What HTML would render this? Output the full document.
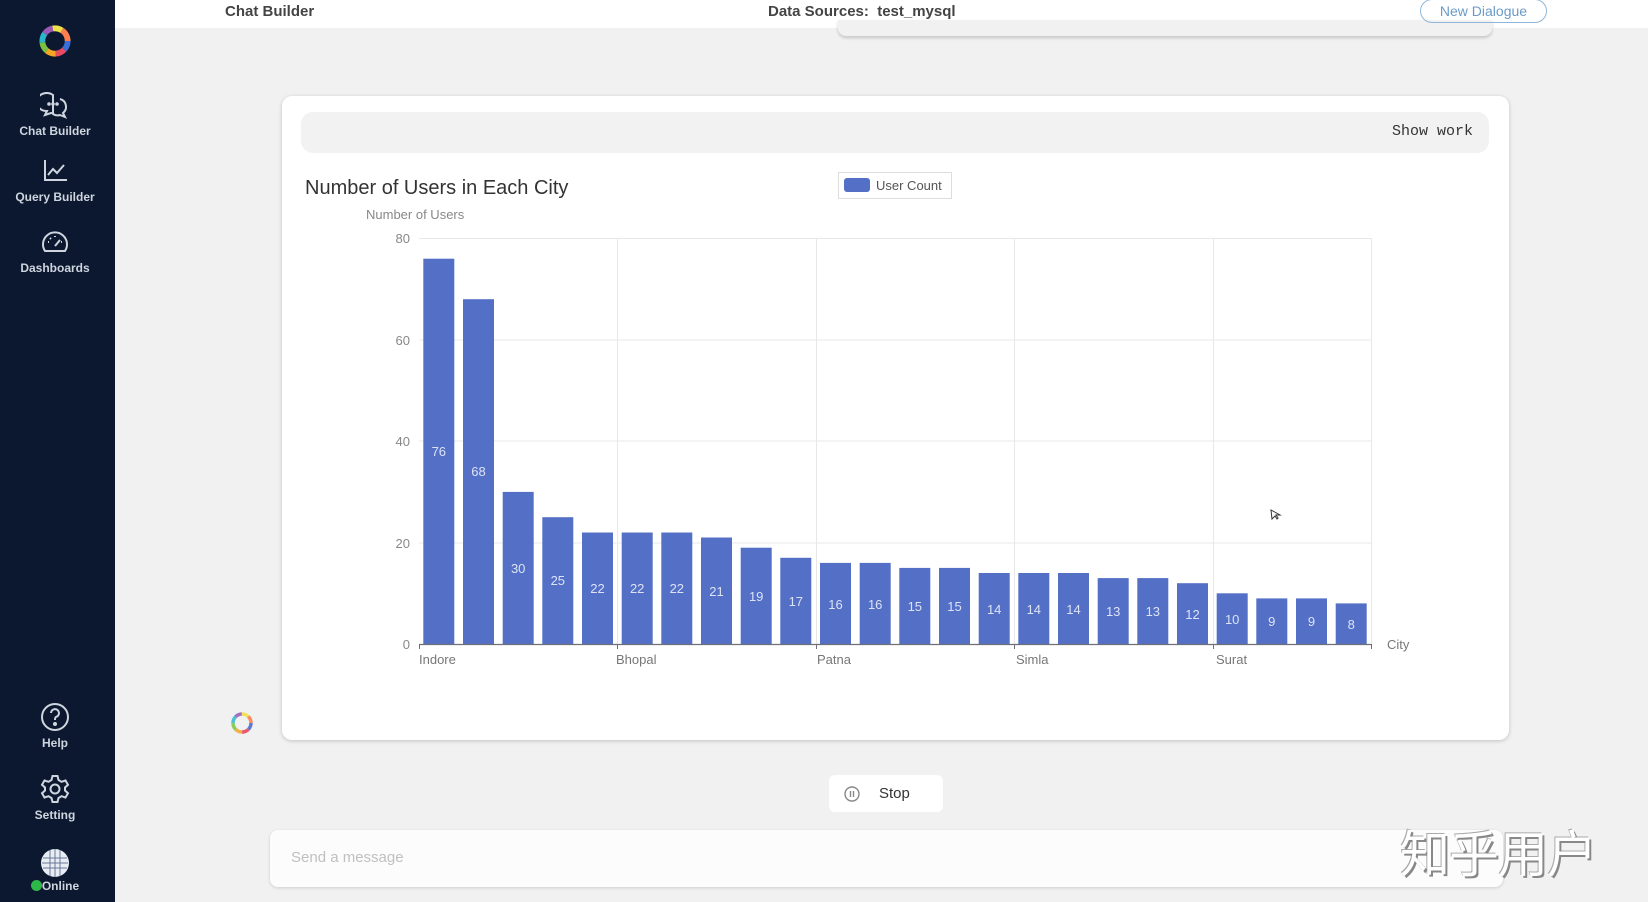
<!DOCTYPE html>
<html><head><meta charset="utf-8">
<style>
*{margin:0;padding:0;box-sizing:border-box}
body{width:1648px;height:902px;overflow:hidden;background:#f1f1f1;font-family:"Liberation Sans",sans-serif;position:relative}
.side{position:absolute;left:0;top:0;width:115px;height:902px;background:#0b1830}
.si{position:absolute;left:0;width:110px;text-align:center;color:#cfd5de;font-size:12px;font-weight:bold}
.si svg{display:block;margin:0 auto}
.hdr{position:absolute;left:115px;top:0;right:0;height:28px;background:#fff}
.ht{position:absolute;top:3px;font-size:15px;font-weight:bold;color:#444}
.nd{position:absolute;left:1420px;top:-1px;width:127px;height:24px;border:1.5px solid #8fb6d8;border-radius:13px;color:#6a9bc8;font-size:14px;text-align:center;line-height:22px}
.ghost{position:absolute;left:838px;top:20px;width:654px;height:16px;background:#f1f1f1;border-radius:0 0 8px 8px;box-shadow:0 2px 3px rgba(0,0,0,.18)}
.card{position:absolute;left:282px;top:96px;width:1227px;height:644px;background:#fff;border-radius:10px;box-shadow:0 1px 4px rgba(0,0,0,.2)}
.sw{position:absolute;left:19px;top:16px;width:1188px;height:41px;background:#f2f2f2;border-radius:12px}
.sw span{position:absolute;right:16px;top:11px;font-family:"Liberation Mono",monospace;font-size:15px;color:#333}
.stop{position:absolute;left:829px;top:775px;width:114px;height:37px;background:#fff;border-radius:6px}
.inp{position:absolute;left:270px;top:830px;width:1233px;height:57px;background:#fcfcfc;border-radius:8px;box-shadow:0 1px 3px rgba(0,0,0,.15)}
.inp span{position:absolute;left:21px;top:19px;font-size:15px;color:#c0c0c0}
.wm{position:absolute;left:1400px;top:815px;font-family:"Noto Sans CJK SC",sans-serif;font-size:50px;color:#fff;text-shadow:2px 2px 0 #888,-1px -1px 0 #aaa;letter-spacing:-1px}
</style></head><body>
<div class="side">
  <svg style="position:absolute;left:36px;top:22px" width="38" height="38" viewBox="0 0 36 36">
    <g fill="none" stroke-width="5.5">
      <circle cx="18" cy="18" r="12" stroke="#3b6fd8" stroke-dasharray="9 66" />
      <circle cx="18" cy="18" r="12" stroke="#e84a5f" stroke-dasharray="0 9 9 57"/>
      <circle cx="18" cy="18" r="12" stroke="#f5a623" stroke-dasharray="0 18 9 48"/>
      <circle cx="18" cy="18" r="12" stroke="#7bc043" stroke-dasharray="0 27 9 39"/>
      <circle cx="18" cy="18" r="12" stroke="#2ab7ca" stroke-dasharray="0 36 9 30"/>
      <circle cx="18" cy="18" r="12" stroke="#9b59b6" stroke-dasharray="0 45 9 21"/>
      <circle cx="18" cy="18" r="12" stroke="#f0e14a" stroke-dasharray="0 54 9 12"/>
      <circle cx="18" cy="18" r="12" stroke="#ff7f50" stroke-dasharray="0 63 12 0"/>
    </g>
  </svg>
  <div class="si" style="top:92px"><svg width="30" height="28" viewBox="0 0 30 28" fill="none" stroke="#cfd5de" stroke-width="2"><path d="M13 3a10 9 0 1 0 -6 16l-2 4 6-2a10 9 0 0 0 2 0z"/><path d="M20 7a8 8 0 0 1 3 14l2 4-5-2a8 8 0 0 1 -8-2"/><circle cx="9" cy="12" r=".8" fill="#cfd5de"/><circle cx="13" cy="12" r=".8" fill="#cfd5de"/><circle cx="17" cy="12" r=".8" fill="#cfd5de"/></svg><div style="margin-top:4px">Chat Builder</div></div>
  <div class="si" style="top:158px"><svg width="28" height="26" viewBox="0 0 28 26" fill="none" stroke="#cfd5de" stroke-width="2"><path d="M4 2v20h22"/><path d="M7 17l5-6 4 4 7-8"/></svg><div style="margin-top:6px">Query Builder</div></div>
  <div class="si" style="top:229px"><svg width="30" height="28" viewBox="0 0 30 28" fill="none" stroke="#cfd5de" stroke-width="2"><path d="M5 22a12 12 0 1 1 20 0z"/><path d="M15 17l5-6"/><path d="M8 13h1M15 7v1M21 13h1M10 9l1 1"/></svg><div style="margin-top:4px">Dashboards</div></div>
  <div class="si" style="top:702px"><svg width="30" height="30" viewBox="0 0 30 30" fill="none" stroke="#cfd5de" stroke-width="2"><circle cx="15" cy="15" r="13"/><path d="M11 11a4 4 0 1 1 5 4c-1 .5-1 1.5-1 3"/><circle cx="15" cy="22" r="1" fill="#cfd5de"/></svg><div style="margin-top:4px">Help</div></div>
  <div class="si" style="top:774px"><svg width="30" height="30" viewBox="0 0 30 30" fill="none" stroke="#cfd5de" stroke-width="2"><path d="M12.5 2h5l1 4 3 1.8 4-1.3 2.5 4.3-3 2.7v3l3 2.7-2.5 4.3-4-1.3-3 1.8-1 4h-5l-1-4-3-1.8-4 1.3-2.5-4.3 3-2.7v-3l-3-2.7 2.5-4.3 4 1.3 3-1.8z"/><circle cx="15" cy="15" r="4.5"/></svg><div style="margin-top:4px">Setting</div></div>
  <div class="si" style="top:848px"><svg width="30" height="30" viewBox="0 0 30 30"><circle cx="15" cy="15" r="14" fill="#e8ecf3"/><g stroke="#6b7a99" stroke-width="1"><path d="M3 10h24M2 15h26M3 20h24M10 2v26M15 1v28M20 2v26"/></g></svg><div style="margin-top:1px"><span style="display:inline-block;width:11px;height:11px;border-radius:50%;background:#2eb84a;vertical-align:-1px"></span>Online</div></div>
</div>
<div class="hdr">
  <div class="ht" style="left:110px">Chat Builder</div>
  <div class="ht" style="left:653px">Data Sources:&nbsp; test_mysql</div>
</div>
<div class="ghost"></div>
<div class="nd">New Dialogue</div>
<div class="card"><div class="sw"><span>Show work</span></div></div>
<svg style="position:absolute;left:0;top:0" width="1648" height="902">
  <text x="305" y="194" font-size="20" fill="#333" font-weight="500" font-family="Liberation Sans">Number of Users in Each City</text>
  <rect x="838.5" y="172.5" width="113" height="26" fill="#fff" stroke="#ddd"/>
  <rect x="844" y="178" width="26" height="14" rx="3" fill="#5470c6"/>
  <text x="876" y="190" font-size="13" fill="#555" font-family="Liberation Sans">User Count</text>
  <text x="366" y="219" font-size="13" fill="#888" font-family="Liberation Sans">Number of Users</text>
  <g stroke="#e8e8e8" stroke-width="1">
    <path d="M419 238.5H1371M419 340H1371M419 441H1371M419 543H1371"/>
    <path d="M617.5 238V644M816.5 238V644M1014.5 238V644M1213.5 238V644M1371.5 238V644"/>
  </g>
  <g font-size="13" fill="#888" text-anchor="end" font-family="Liberation Sans">
    <text x="410" y="243">80</text><text x="410" y="345">60</text><text x="410" y="446">40</text><text x="410" y="548">20</text><text x="410" y="649">0</text>
  </g>
  <g fill="#5470c6">
    <rect x="423.3" y="258.7" width="31" height="385.3"/>
    <rect x="463" y="299.2" width="31" height="344.8"/>
    <rect x="502.7" y="491.9" width="31" height="152.1"/>
    <rect x="542.3" y="517.2" width="31" height="126.8"/>
    <rect x="582" y="532.5" width="31" height="111.5"/>
    <rect x="621.7" y="532.5" width="31" height="111.5"/>
    <rect x="661.3" y="532.5" width="31" height="111.5"/>
    <rect x="701" y="537.5" width="31" height="106.5"/>
    <rect x="740.7" y="547.7" width="31" height="96.3"/>
    <rect x="780.3" y="557.8" width="31" height="86.2"/>
    <rect x="820" y="562.9" width="31" height="81.1"/>
    <rect x="859.7" y="562.9" width="31" height="81.1"/>
    <rect x="899.3" y="567.9" width="31" height="76.1"/>
    <rect x="939" y="567.9" width="31" height="76.1"/>
    <rect x="978.7" y="573" width="31" height="71"/>
    <rect x="1018.3" y="573" width="31" height="71"/>
    <rect x="1058" y="573" width="31" height="71"/>
    <rect x="1097.7" y="578.1" width="31" height="65.9"/>
    <rect x="1137.3" y="578.1" width="31" height="65.9"/>
    <rect x="1177" y="583.2" width="31" height="60.8"/>
    <rect x="1216.7" y="593.3" width="31" height="50.7"/>
    <rect x="1256.3" y="598.4" width="31" height="45.6"/>
    <rect x="1296" y="598.4" width="31" height="45.6"/>
    <rect x="1335.7" y="603.4" width="31" height="40.6"/>
  </g>
  <g font-size="13" fill="#dde3f6" text-anchor="middle" font-family="Liberation Sans">
    <text x="438.8" y="456">76</text><text x="478.5" y="476">68</text><text x="518.2" y="573">30</text><text x="557.8" y="585">25</text>
    <text x="597.5" y="593">22</text><text x="637.2" y="593">22</text><text x="676.8" y="593">22</text><text x="716.5" y="596">21</text>
    <text x="756.2" y="601">19</text><text x="795.8" y="606">17</text><text x="835.5" y="609">16</text><text x="875.2" y="609">16</text>
    <text x="914.8" y="611">15</text><text x="954.5" y="611">15</text><text x="994.2" y="614">14</text><text x="1033.8" y="614">14</text>
    <text x="1073.5" y="614">14</text><text x="1113.2" y="616">13</text><text x="1152.8" y="616">13</text><text x="1192.5" y="619">12</text>
    <text x="1232.2" y="624">10</text><text x="1271.8" y="626">9</text><text x="1311.5" y="626">9</text><text x="1351.2" y="629">8</text>
  </g>
  <path d="M419 644.5H1371" stroke="#6e7079" stroke-width="1.3"/>
  <path d="M419.5 644v5M617.5 644v5M816.5 644v5M1014.5 644v5M1213.5 644v5M1371.5 644v5" stroke="#6e7079"/>
  <g font-size="13" fill="#777" font-family="Liberation Sans">
    <text x="419" y="664">Indore</text><text x="616" y="664">Bhopal</text><text x="817" y="664">Patna</text><text x="1016" y="664">Simla</text><text x="1216" y="664">Surat</text>
    <text x="1387" y="649">City</text>
  </g>
  <g transform="translate(242 723)" fill="none" stroke-width="3.5">
    <circle r="9" stroke="#5b7ad6" stroke-dasharray="7 50"/>
    <circle r="9" stroke="#e85a6a" stroke-dasharray="0 7 7 43"/>
    <circle r="9" stroke="#f4b046" stroke-dasharray="0 14 7 36"/>
    <circle r="9" stroke="#8acb5a" stroke-dasharray="0 21 7 29"/>
    <circle r="9" stroke="#4cc2d4" stroke-dasharray="0 28 7 22"/>
    <circle r="9" stroke="#a26fc2" stroke-dasharray="0 35 7 15"/>
    <circle r="9" stroke="#f1e25c" stroke-dasharray="0 42 7 8"/>
    <circle r="9" stroke="#ff8a5c" stroke-dasharray="0 49 8 0"/>
  </g>
  <path d="M1271 510l1 9 3-3 2 3 1-1-2-3 4 0z" fill="#fff" stroke="#333" stroke-width="1"/>
</svg>
<div class="stop">
  <svg style="position:absolute;left:15px;top:11px" width="16" height="16" viewBox="0 0 16 16" fill="none" stroke="#888" stroke-width="1.4"><circle cx="8" cy="8" r="7"/><path d="M6.5 5v6M9.5 5v6"/></svg>
  <span style="position:absolute;left:50px;top:10px;font-size:15px;color:#333">Stop</span>
</div>
<div class="inp"><span>Send a message</span></div>
<div class="wm">知乎用户</div>
</body></html>
